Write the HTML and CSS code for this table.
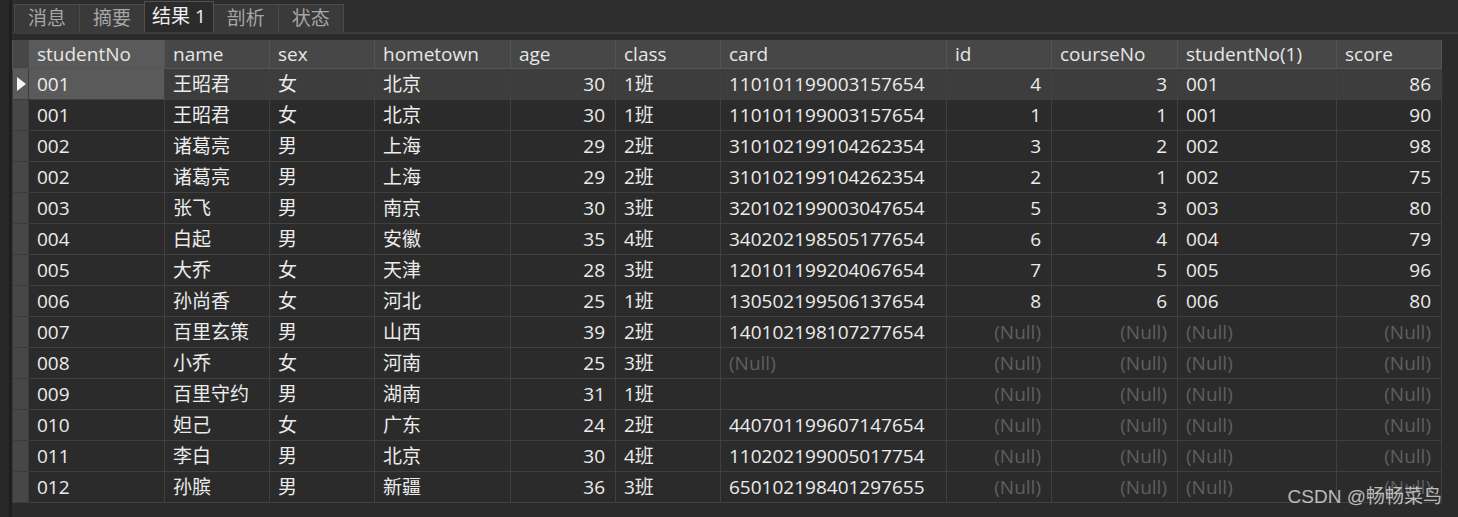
FILE: index.html
```html
<!DOCTYPE html>
<html lang="zh">
<head>
<meta charset="utf-8">
<link rel="stylesheet" href="styles.css">
</head>
<body>
<div class="app">
  <div class="leftbar"></div>
  <div class="main">
    <div class="tabs">
      <div class="tab">消息</div>
      <div class="tab">摘要</div>
      <div class="tab active">结果 1</div>
      <div class="tab">剖析</div>
      <div class="tab">状态</div>
    </div>
    <div class="gridwrap">
      <table class="grid">
        <colgroup>
          <col class="c-ind"><col class="c-sno"><col class="c-name"><col class="c-sex"><col class="c-home"><col class="c-age"><col class="c-class"><col class="c-card"><col class="c-id"><col class="c-cno"><col class="c-sno1"><col class="c-score">
        </colgroup>
        <thead>
          <tr>
            <th class="ind"></th>
            <th class="selcol">studentNo</th><th>name</th><th>sex</th><th>hometown</th><th>age</th><th>class</th><th>card</th><th>id</th><th>courseNo</th><th>studentNo(1)</th><th>score</th>
          </tr>
        </thead>
        <tbody>
          <tr class="sel"><td class="ind"><span class="arrow"></span></td><td class="selcell">001</td><td>王昭君</td><td>女</td><td>北京</td><td class="num">30</td><td>1班</td><td>110101199003157654</td><td class="num">4</td><td class="num">3</td><td>001</td><td class="num">86</td></tr>
          <tr><td class="ind"></td><td>001</td><td>王昭君</td><td>女</td><td>北京</td><td class="num">30</td><td>1班</td><td>110101199003157654</td><td class="num">1</td><td class="num">1</td><td>001</td><td class="num">90</td></tr>
          <tr><td class="ind"></td><td>002</td><td>诸葛亮</td><td>男</td><td>上海</td><td class="num">29</td><td>2班</td><td>310102199104262354</td><td class="num">3</td><td class="num">2</td><td>002</td><td class="num">98</td></tr>
          <tr><td class="ind"></td><td>002</td><td>诸葛亮</td><td>男</td><td>上海</td><td class="num">29</td><td>2班</td><td>310102199104262354</td><td class="num">2</td><td class="num">1</td><td>002</td><td class="num">75</td></tr>
          <tr><td class="ind"></td><td>003</td><td>张飞</td><td>男</td><td>南京</td><td class="num">30</td><td>3班</td><td>320102199003047654</td><td class="num">5</td><td class="num">3</td><td>003</td><td class="num">80</td></tr>
          <tr><td class="ind"></td><td>004</td><td>白起</td><td>男</td><td>安徽</td><td class="num">35</td><td>4班</td><td>340202198505177654</td><td class="num">6</td><td class="num">4</td><td>004</td><td class="num">79</td></tr>
          <tr><td class="ind"></td><td>005</td><td>大乔</td><td>女</td><td>天津</td><td class="num">28</td><td>3班</td><td>120101199204067654</td><td class="num">7</td><td class="num">5</td><td>005</td><td class="num">96</td></tr>
          <tr><td class="ind"></td><td>006</td><td>孙尚香</td><td>女</td><td>河北</td><td class="num">25</td><td>1班</td><td>130502199506137654</td><td class="num">8</td><td class="num">6</td><td>006</td><td class="num">80</td></tr>
          <tr><td class="ind"></td><td>007</td><td>百里玄策</td><td>男</td><td>山西</td><td class="num">39</td><td>2班</td><td>140102198107277654</td><td class="num null">(Null)</td><td class="num null">(Null)</td><td class="null">(Null)</td><td class="num null">(Null)</td></tr>
          <tr><td class="ind"></td><td>008</td><td>小乔</td><td>女</td><td>河南</td><td class="num">25</td><td>3班</td><td class="null">(Null)</td><td class="num null">(Null)</td><td class="num null">(Null)</td><td class="null">(Null)</td><td class="num null">(Null)</td></tr>
          <tr><td class="ind"></td><td>009</td><td>百里守约</td><td>男</td><td>湖南</td><td class="num">31</td><td>1班</td><td></td><td class="num null">(Null)</td><td class="num null">(Null)</td><td class="null">(Null)</td><td class="num null">(Null)</td></tr>
          <tr><td class="ind"></td><td>010</td><td>妲己</td><td>女</td><td>广东</td><td class="num">24</td><td>2班</td><td>440701199607147654</td><td class="num null">(Null)</td><td class="num null">(Null)</td><td class="null">(Null)</td><td class="num null">(Null)</td></tr>
          <tr><td class="ind"></td><td>011</td><td>李白</td><td>男</td><td>北京</td><td class="num">30</td><td>4班</td><td>110202199005017754</td><td class="num null">(Null)</td><td class="num null">(Null)</td><td class="null">(Null)</td><td class="num null">(Null)</td></tr>
          <tr><td class="ind"></td><td>012</td><td>孙膑</td><td>男</td><td>新疆</td><td class="num">36</td><td>3班</td><td>650102198401297655</td><td class="num null">(Null)</td><td class="num null">(Null)</td><td class="null">(Null)</td><td class="num null">(Null)</td></tr>
        </tbody>
      </table>
      <div class="watermark">CSDN @畅畅菜鸟</div>
    </div>
  </div>
</div>
</body>
</html>
```

FILE: styles.css
```css
html, body {
  margin: 0;
  padding: 0;
  background: #262626;
  height: 100%;
  overflow: hidden;
}
.app {
  display: flex;
  height: 517px;
  font-family: "Open Sans", "Noto Sans CJK SC", sans-serif;
  font-size: 19px;
}
.leftbar {
  width: 9px;
  background: #272727;
  border-right: 3px solid #1f1f1f;
}
.main {
  flex: 1;
  display: flex;
  flex-direction: column;
  background: #2b2b2b;
}
.tabs {
  display: flex;
  height: 32px;
  padding-left: 2px;
  align-items: flex-end;
  border-bottom: 2px solid #3c3c3c;
  background: #2d2d2d;
}
.tab {
  height: 28px;
  box-sizing: border-box;
  padding: 0 13px;
  line-height: 27px;
  color: #a6a6a6;
  background: #3a3a3a;
  border: 1px solid #4a4a4a;
  border-bottom: none;
  border-right: none;
  font-size: 19px;
}
.tab:nth-child(5) { border-right: 1px solid #4a4a4a; }
.tab.active {
  height: 31px;
  background: #2b2b2b;
  color: #f0f0f0;
  border: 1px solid #505050;
  border-bottom: none;
  padding: 0 7px;
  line-height: 28px;
}
.tab.active + .tab { border-left: none; }
.gridwrap {
  position: relative;
  flex: 1;
  padding-top: 6px;
  background: #2b2b2b;
}
.grid {
  border-collapse: collapse;
  table-layout: fixed;
  width: 1429px;
  color: #ececec;
}
.c-ind { width: 16px; }
.c-sno { width: 136px; }
.c-name { width: 105px; }
.c-sex { width: 105px; }
.c-home { width: 136px; }
.c-age { width: 105px; }
.c-class { width: 105px; }
.c-card { width: 226px; }
.c-id { width: 105px; }
.c-cno { width: 126px; }
.c-sno1 { width: 159px; }
.c-score { width: 105px; }
.grid th {
  height: 28px;
  padding: 0 8px;
  background: #474747;
  font-weight: normal;
  text-align: left;
  color: #e6e6e6;
  border: 1px solid #555555;
  border-top: none;
  white-space: nowrap;
  line-height: 26px;
}
.grid th.selcol { background: #5a5a5a; border-left-color: #5a5a5a; }
.grid th.ind { background: #474747; border-right-color: #474747; }
.grid td {
  height: 30px;
  padding: 0 8px;
  border: 1px solid #404040;
  white-space: nowrap;
  overflow: hidden;
  background: #2b2b2b;
  line-height: 26px;
}
.grid td.num { text-align: right; padding-right: 10px; }
.grid td.null { color: #5f5f5f; }
.grid td.ind {
  padding: 0;
  background: #474747;
  border-color: #3c3c3c;
  position: relative;
}
.grid tr.sel td { background: #3d3d3d; }
.grid tr.sel td.ind { background: #5a5a5a; }
.grid tr.sel td.selcell { background: #5a5a5a; }
.arrow {
  position: absolute;
  left: 4px;
  top: 8px;
  width: 0;
  height: 0;
  border-top: 7px solid transparent;
  border-bottom: 7px solid transparent;
  border-left: 9px solid #f5f5f5;
}
.watermark {
  position: absolute;
  right: 16px;
  bottom: 9px;
  color: rgba(235, 235, 235, 0.75);
  font-size: 19px;
  font-family: "Liberation Sans", "Noto Sans CJK SC", sans-serif;
}
```
